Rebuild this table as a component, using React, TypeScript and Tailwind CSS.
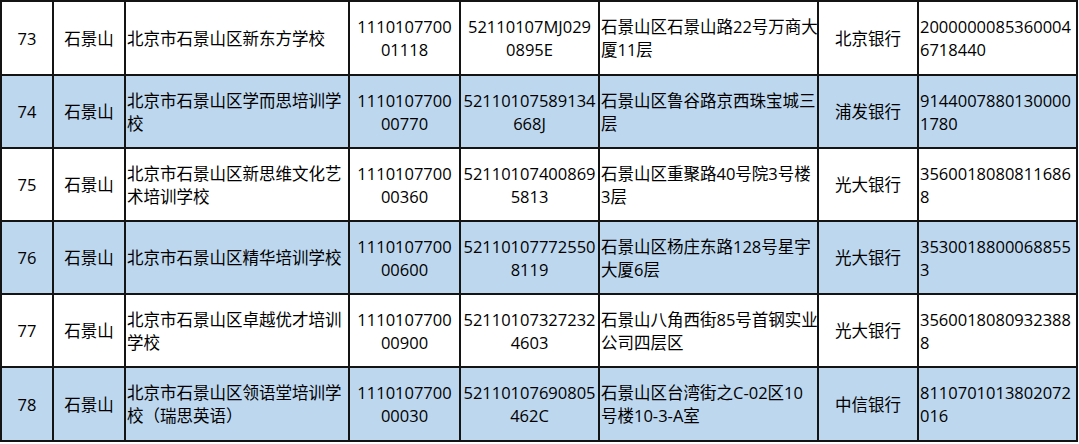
import React from "react";

type Row = {
  no: string;
  district: string;
  name: string[];
  code1: string[];
  code2: string[];
  addr: string[];
  bank: string;
  acct: string[];
  blue: boolean;
};

const rows: Row[] = [
  {
    no: "73",
    district: "石景山",
    name: ["北京市石景山区新东方学校"],
    code1: ["1110107700", "01118"],
    code2: ["52110107MJ029", "0895E"],
    addr: ["石景山区石景山路22号万商大", "厦11层"],
    bank: "北京银行",
    acct: ["2000000085360004", "6718440"],
    blue: false,
  },
  {
    no: "74",
    district: "石景山",
    name: ["北京市石景山区学而思培训学", "校"],
    code1: ["1110107700", "00770"],
    code2: ["52110107589134", "668J"],
    addr: ["石景山区鲁谷路京西珠宝城三", "层"],
    bank: "浦发银行",
    acct: ["9144007880130000", "1780"],
    blue: true,
  },
  {
    no: "75",
    district: "石景山",
    name: ["北京市石景山区新思维文化艺", "术培训学校"],
    code1: ["1110107700", "00360"],
    code2: ["52110107400869", "5813"],
    addr: ["石景山区重聚路40号院3号楼", "3层"],
    bank: "光大银行",
    acct: ["3560018080811686", "8"],
    blue: false,
  },
  {
    no: "76",
    district: "石景山",
    name: ["北京市石景山区精华培训学校"],
    code1: ["1110107700", "00600"],
    code2: ["52110107772550", "8119"],
    addr: ["石景山区杨庄东路128号星宇", "大厦6层"],
    bank: "光大银行",
    acct: ["3530018800068855", "3"],
    blue: true,
  },
  {
    no: "77",
    district: "石景山",
    name: ["北京市石景山区卓越优才培训", "学校"],
    code1: ["1110107700", "00900"],
    code2: ["52110107327232", "4603"],
    addr: ["石景山八角西街85号首钢实业", "公司四层区"],
    bank: "光大银行",
    acct: ["3560018080932388", "8"],
    blue: false,
  },
  {
    no: "78",
    district: "石景山",
    name: ["北京市石景山区领语堂培训学", "校（瑞思英语）"],
    code1: ["1110107700", "00030"],
    code2: ["52110107690805", "462C"],
    addr: ["石景山区台湾街之C-02区10", "号楼10-3-A室"],
    bank: "中信银行",
    acct: ["8110701013802072", "016"],
    blue: true,
  },
];

function Cell({
  lines,
  align,
  blue,
}: {
  lines: string[];
  align: "center" | "left";
  blue: boolean;
}) {
  return (
    <div
      className={
        "flex flex-col justify-center border-r-2 border-b-2 border-[#141414] whitespace-nowrap overflow-hidden " +
        (align === "center" ? "items-center text-center " : "items-start text-left pl-[1px] ") +
        (blue ? "bg-[#bdd7ee]" : "bg-white")
      }
    >
      {lines.map((l, i) => (
        <span key={i}>{l}</span>
      ))}
    </div>
  );
}

export default function App() {
  return (
    <div className="w-[1079px] h-[444px] bg-white overflow-hidden">
      <div
        className="grid grid-cols-[52px_72px_224px_111px_139px_219px_100px_159px] grid-rows-[74px_73px_73px_73px_73px_74px] w-[1078px] border-l-2 border-t-2 border-[#141414] text-[16.5px] leading-[23px] text-black"
        style={{ fontFamily: '"Open Sans", "Noto Sans CJK SC", sans-serif' }}
      >
        {rows.map((r) => (
          <React.Fragment key={r.no}>
            <Cell lines={[r.no]} align="center" blue={r.blue} />
            <Cell lines={[r.district]} align="center" blue={r.blue} />
            <Cell lines={r.name} align="left" blue={r.blue} />
            <Cell lines={r.code1} align="center" blue={r.blue} />
            <Cell lines={r.code2} align="center" blue={r.blue} />
            <Cell lines={r.addr} align="left" blue={r.blue} />
            <Cell lines={[r.bank]} align="center" blue={r.blue} />
            <Cell lines={r.acct} align="left" blue={r.blue} />
          </React.Fragment>
        ))}
      </div>
    </div>
  );
}
